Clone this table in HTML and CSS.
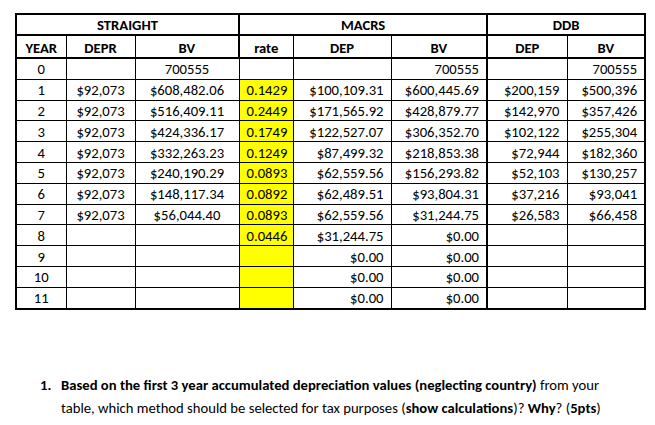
FILE: index.html
```html
<!DOCTYPE html>
<html>
<head>
<meta charset="utf-8">
<link rel="stylesheet" href="styles.css">
</head>
<body>
<div class="page">
<table class="dep">
<colgroup>
<col class="c-year"><col class="c-depr"><col class="c-sbv"><col class="c-rate"><col class="c-mdep"><col class="c-mbv"><col class="c-ddep"><col class="c-dbv">
</colgroup>
<thead>
<tr class="h1">
<th colspan="3" class="grp">STRAIGHT</th>
<th colspan="3" class="grp">MACRS</th>
<th colspan="2">DDB</th>
</tr>
<tr class="h2">
<th>YEAR</th><th>DEPR</th><th class="grp">BV</th><th>rate</th><th>DEP</th><th class="grp">BV</th><th>DEP</th><th>BV</th>
</tr>
</thead>
<tbody>
<tr><td class="c">0</td><td class="c"></td><td class="c">700555</td><td class="c"></td><td class="r"></td><td class="r grp">700555</td><td class="r"></td><td class="r">700555</td></tr>
<tr><td class="c">1</td><td class="c">$92,073</td><td class="c">$608,482.06</td><td class="c y">0.1429</td><td class="r">$100,109.31</td><td class="r grp">$600,445.69</td><td class="r">$200,159</td><td class="r">$500,396</td></tr>
<tr><td class="c">2</td><td class="c">$92,073</td><td class="c">$516,409.11</td><td class="c y">0.2449</td><td class="r">$171,565.92</td><td class="r grp">$428,879.77</td><td class="r">$142,970</td><td class="r">$357,426</td></tr>
<tr><td class="c">3</td><td class="c">$92,073</td><td class="c">$424,336.17</td><td class="c y">0.1749</td><td class="r">$122,527.07</td><td class="r grp">$306,352.70</td><td class="r">$102,122</td><td class="r">$255,304</td></tr>
<tr><td class="c">4</td><td class="c">$92,073</td><td class="c">$332,263.23</td><td class="c y">0.1249</td><td class="r">$87,499.32</td><td class="r grp">$218,853.38</td><td class="r">$72,944</td><td class="r">$182,360</td></tr>
<tr><td class="c">5</td><td class="c">$92,073</td><td class="c">$240,190.29</td><td class="c y">0.0893</td><td class="r">$62,559.56</td><td class="r grp">$156,293.82</td><td class="r">$52,103</td><td class="r">$130,257</td></tr>
<tr><td class="c">6</td><td class="c">$92,073</td><td class="c">$148,117.34</td><td class="c y">0.0892</td><td class="r">$62,489.51</td><td class="r grp">$93,804.31</td><td class="r">$37,216</td><td class="r">$93,041</td></tr>
<tr><td class="c">7</td><td class="c">$92,073</td><td class="c">$56,044.40</td><td class="c y">0.0893</td><td class="r">$62,559.56</td><td class="r grp">$31,244.75</td><td class="r">$26,583</td><td class="r">$66,458</td></tr>
<tr><td class="c">8</td><td class="c"></td><td class="c"></td><td class="c y">0.0446</td><td class="r">$31,244.75</td><td class="r grp">$0.00</td><td class="r"></td><td class="r"></td></tr>
<tr><td class="c">9</td><td class="c"></td><td class="c"></td><td class="c y"></td><td class="r">$0.00</td><td class="r grp">$0.00</td><td class="r"></td><td class="r"></td></tr>
<tr><td class="c">10</td><td class="c"></td><td class="c"></td><td class="c y"></td><td class="r">$0.00</td><td class="r grp">$0.00</td><td class="r"></td><td class="r"></td></tr>
<tr class="last"><td class="c thickb">11</td><td class="c thinb"></td><td class="c thinb"></td><td class="c y thinb"></td><td class="r thickb">$0.00</td><td class="r grp thickb">$0.00</td><td class="r thickb"></td><td class="r thickb"></td></tr>
</tbody>
</table>

<div class="q">
<span class="num">1.</span>
<p><b>Based on the first 3 year accumulated depreciation values (neglecting country)</b> from your<br>table, which method should be selected for tax purposes (<b>show calculations</b>)? <b>Why</b>? (<b>5pts</b>)</p>
</div>
</div>
</body>
</html>
```
FILE: styles.css
```css
html, body {
  margin: 0;
  padding: 0;
  background: #fff;
}
.page {
  padding: 13px 0 0 15px;
  font-family: Carlito, Calibri, Lato, sans-serif;
  font-size: 14.67px;
  color: #000;
}
.dep {
  border-collapse: collapse;
  table-layout: fixed;
  width: 631px;
  border: 2px solid #000;
}
.c-year { width: 50px; }
.c-depr { width: 69px; }
.c-sbv { width: 104px; }
.c-rate { width: 54px; }
.c-mdep { width: 98px; }
.c-mbv { width: 96px; }
.c-ddep { width: 80px; }
.c-dbv { width: 78px; }
.dep th, .dep td {
  border: 1px solid #000;
  padding: 0 7px;
  white-space: nowrap;
  line-height: 18px;
}
.dep th {
  font-weight: bold;
  text-align: center;
}
.h1 th {
  height: 18px;
  padding-top: 1px;
  border-bottom: 2px solid #000;
}
.h2 th {
  height: 19px;
  padding-top: 2px;
  border-bottom: 2px solid #000;
}
.dep td {
  height: 18.8px;
  padding-top: 1px;
}
.grp {
  border-right: 2px solid #000 !important;
}
.c { text-align: center; }
.r { text-align: right; }
.y { background: #ffff00; }
.thickb { border-bottom: 2px solid #000 !important; }
.thinb { border-bottom: 1px solid #000 !important; }

.q {
  display: flex;
  margin: 64px 0 0 25px;
}
.num {
  font-weight: bold;
  width: 21px;
  flex: none;
  line-height: 23px;
}
.q p {
  margin: 0;
  white-space: nowrap;
  line-height: 23px;
}
```
